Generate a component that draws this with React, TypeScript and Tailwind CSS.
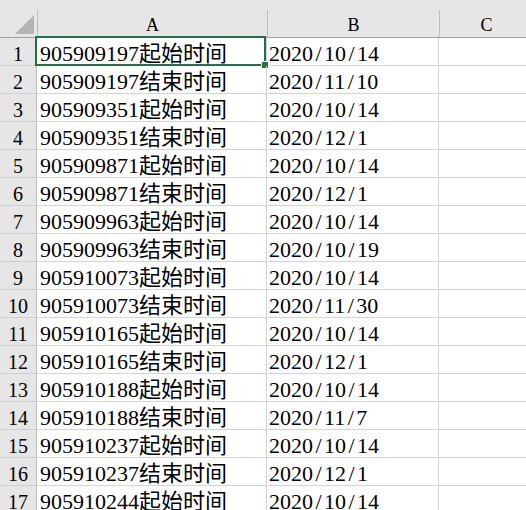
const rows: [string, string][] = [
  ['905909197起始时间', '2020/10/14'],
  ['905909197结束时间', '2020/11/10'],
  ['905909351起始时间', '2020/10/14'],
  ['905909351结束时间', '2020/12/1'],
  ['905909871起始时间', '2020/10/14'],
  ['905909871结束时间', '2020/12/1'],
  ['905909963起始时间', '2020/10/14'],
  ['905909963结束时间', '2020/10/19'],
  ['905910073起始时间', '2020/10/14'],
  ['905910073结束时间', '2020/11/30'],
  ['905910165起始时间', '2020/10/14'],
  ['905910165结束时间', '2020/12/1'],
  ['905910188起始时间', '2020/10/14'],
  ['905910188结束时间', '2020/11/7'],
  ['905910237起始时间', '2020/10/14'],
  ['905910237结束时间', '2020/12/1'],
  ['905910244起始时间', '2020/10/14'],
  ['905910244结束时间', '2020/12/1'],
]

// dates: slashes are half-width in the sheet font, so give them a fixed box
function DateText({ value }: { value: string }) {
  const parts = value.split('/')
  return (
    <>
      {parts.map((p, i) => (
        <span key={i}>
          {i > 0 && <span className="inline-block w-[11px] text-center">/</span>}
          {p}
        </span>
      ))}
    </>
  )
}

export default function App() {
  return (
    <div
      className="h-[510px] w-[526px] overflow-hidden bg-white text-black"
      style={{ fontFamily: '"Liberation Serif", "Noto Sans CJK SC", serif' }}
    >
      {/* column headers */}
      <div className="flex h-[38px] border-b border-[#9f9f9f] bg-[#e6e6e6]">
        <div className="flex w-[37px] shrink-0 items-start pl-[15px] pt-[15px]">
          <svg width="19" height="19" viewBox="0 0 19 19">
            <polygon points="19,0 19,19 0,19" fill="#b4b4b4" />
          </svg>
        </div>
        {[
          ['A', 'w-[230px]'],
          ['B', 'w-[172px]'],
          ['C', 'w-[94px]'],
        ].map(([label, w]) => (
          <div key={label} className={`${w} shrink-0 pt-[10px]`}>
            <div className="flex h-full items-end justify-center border-l border-[#bdbdbd] pb-[2px] text-[18px] leading-[20px]">
              {label}
            </div>
          </div>
        ))}
      </div>

      {rows.map(([a, b], i) => (
        <div key={i} className="flex h-[28px]">
          <div className="flex w-[37px] shrink-0 items-end justify-center border-r border-b border-r-[#bdbdbd] border-b-[#cfcfcf] bg-[#e6e6e6] pb-[1px] text-[20px] leading-[20px]">
            {i + 1}
          </div>
          <div className="relative flex w-[230px] shrink-0 items-end border-r border-b border-[#d4d4d4] pb-[1px] pl-[3px] text-[22px] leading-[20px] whitespace-nowrap">
            {a}
            {i === 0 && (
              <>
                <div className="absolute left-[-2px] top-[-2px] h-[30px] w-[231px] border-2 border-[#217346]" />
                <div className="absolute left-[224px] top-[23px] h-[8px] w-[8px] border border-white bg-[#217346]" />
              </>
            )}
          </div>
          <div className="flex w-[172px] shrink-0 items-end border-r border-b border-[#d4d4d4] pb-[1px] pl-[2px] text-[22px] leading-[20px] whitespace-nowrap">
            <DateText value={b} />
          </div>
          <div className="w-[94px] shrink-0 border-b border-[#d4d4d4]" />
        </div>
      ))}
    </div>
  )
}
